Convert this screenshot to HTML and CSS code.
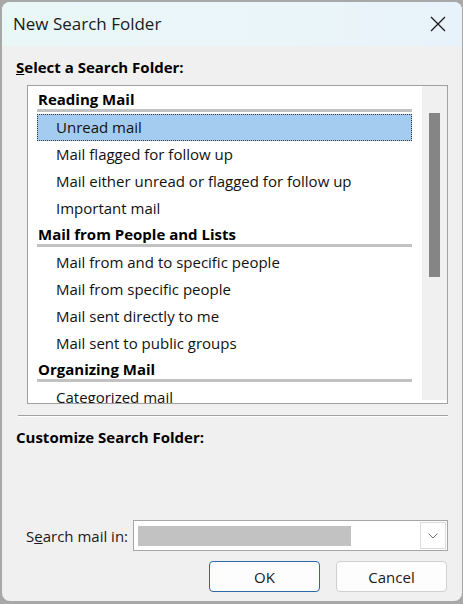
FILE: index.html
```html
<!DOCTYPE html>
<html lang="en">
<head>
  <meta charset="UTF-8">
  <meta name="viewport" content="width=device-width, initial-scale=1.0">
  <title>New Search Folder</title>
  <link rel="stylesheet" href="styles.css">
</head>
<body>
  <div class="window">
    <div class="titlebar">
      <span class="title">New Search Folder</span>
      <button class="close" aria-label="Close">
        <svg width="16" height="16" viewBox="0 0 16 16">
          <path d="M1 1 L15 15 M15 1 L1 15" stroke="#1a1a1a" stroke-width="1.3" fill="none"/>
        </svg>
      </button>
    </div>

    <div class="content">
      <div class="label bold"><u>S</u>elect a Search Folder:</div>

      <div class="listbox">
        <div class="list">
          <div class="group">Reading Mail</div>
          <div class="item selected">Unread mail</div>
          <div class="item">Mail flagged for follow up</div>
          <div class="item">Mail either unread or flagged for follow up</div>
          <div class="item">Important mail</div>

          <div class="group">Mail from People and Lists</div>
          <div class="item">Mail from and to specific people</div>
          <div class="item">Mail from specific people</div>
          <div class="item">Mail sent directly to me</div>
          <div class="item">Mail sent to public groups</div>

          <div class="group">Organizing Mail</div>
          <div class="item">Categorized mail</div>
        </div>
        <div class="scrollbar">
          <div class="thumb"></div>
        </div>
      </div>

      <div class="divider"></div>

      <div class="label bold customize">Customize Search Folder:</div>

      <div class="search-row">
        <span class="search-label">S<u>e</u>arch mail in:</span>
        <div class="combo">
          <div class="combo-value"></div>
          <div class="combo-button">
            <svg width="10" height="6" viewBox="0 0 10 6">
              <path d="M0.5 0.5 L5 5 L9.5 0.5" stroke="#707070" stroke-width="1" fill="none"/>
            </svg>
          </div>
        </div>
      </div>

      <div class="buttons">
        <button class="btn default">OK</button>
        <button class="btn">Cancel</button>
      </div>
    </div>
  </div>
</body>
</html>
```

FILE: styles.css
```css
body {
  margin: 0;
  background: #a8a8a8;
  font-family: "Open Sans", "Noto Sans", sans-serif;
  color: #000;
}

.window {
  margin: 2px 1px 0 2px;
  height: 599px;
  background: #f0f0f0;
  border-radius: 8px;
  overflow: hidden;
  display: flex;
  flex-direction: column;
}

.titlebar {
  height: 44px;
  display: flex;
  align-items: center;
  justify-content: space-between;
  padding: 0 16px 0 11px;
  background: linear-gradient(90deg, #e9f7f7, #eaf5f9 60%, #e8f2fa);
}

.title {
  font-size: 17px;
  color: #1a1a1a;
  padding-bottom: 2px;
}

.close {
  border: none;
  background: none;
  padding: 0;
  width: 16px;
  height: 16px;
  display: flex;
}

.content {
  flex: 1;
  padding: 0 14px 0 14px;
  display: flex;
  flex-direction: column;
}

.label {
  font-size: 15px;
  margin-top: 11px;
  height: 20px;
  line-height: 20px;
}

.bold {
  font-weight: 700;
}

.listbox {
  margin: 8px 0 0 11px;
  height: 317px;
  border: 1px solid #a0a0a0;
  background: #fff;
  display: flex;
  overflow: hidden;
}

.list {
  flex: 1;
  padding: 1px 10px 0 9px;
  overflow: hidden;
}

.group {
  height: 22px;
  line-height: 24px;
  font-weight: 700;
  font-size: 15px;
  padding-left: 1px;
  border-bottom: 3px solid #c2c2c2;
  margin-bottom: 2px;
  white-space: nowrap;
}

.item {
  height: 27px;
  line-height: 27px;
  font-size: 15px;
  padding-left: 19px;
  color: #111;
  box-sizing: border-box;
  white-space: nowrap;
}

.item.selected {
  background: #a3ccf0;
  outline: 1px dotted #333;
  outline-offset: -1px;
}

.scrollbar {
  width: 25px;
  background: #f0f0f0;
  margin: 0 0 3px 0;
  display: flex;
  justify-content: center;
  padding-top: 27px;
}

.thumb {
  width: 11px;
  height: 164px;
  background: #858585;
}

.divider {
  margin: 11px 0 0 2px;
  height: 1px;
  background: #a0a0a0;
  border-bottom: 1px solid #fff;
}

.customize {
  margin-top: 10px;
}

.search-row {
  margin-top: 73px;
  display: flex;
  align-items: center;
  padding-left: 10px;
}

.search-label {
  font-size: 15px;
  color: #1a1a1a;
  width: 107px;
}

.combo {
  flex: 1;
  height: 29px;
  border: 1px solid #a6a6a6;
  background: #fff;
  display: flex;
  align-items: center;
  padding-left: 4px;
}

.combo-value {
  width: 213px;
  height: 20px;
  background: #c2c2c2;
}

.combo-button {
  margin-left: auto;
  margin-right: 1px;
  width: 24px;
  height: 25px;
  border: 1px solid #dcdcdc;
  display: flex;
  align-items: center;
  justify-content: center;
}

.buttons {
  margin-top: 10px;
  display: flex;
  justify-content: flex-end;
  gap: 16px;
  padding-right: 1px;
}

.btn {
  width: 111px;
  height: 31px;
  font-family: inherit;
  font-size: 15px;
  color: #1a1a1a;
  background: #fdfdfd;
  border: 1px solid #d0d0d0;
  border-radius: 4px;
}

.btn.default {
  border-color: #2b68a8;
}
```
